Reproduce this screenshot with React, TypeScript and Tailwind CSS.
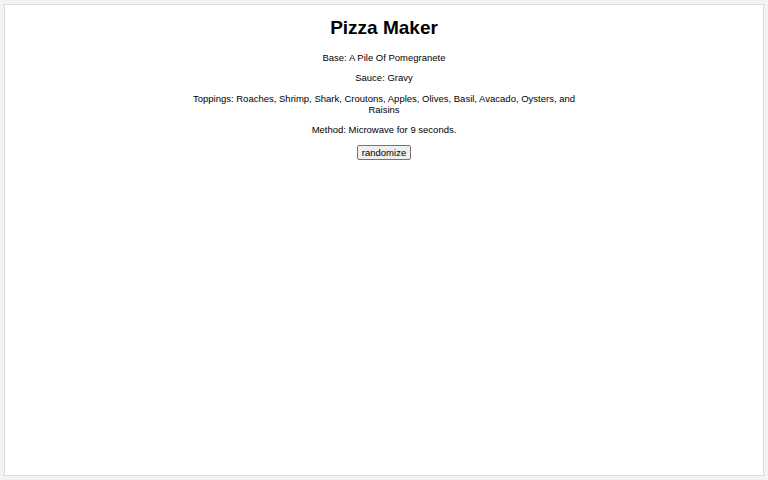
export default function App() {
  const toppings = ["Roaches", "Shrimp", "Shark", "Croutons", "Apples", "Olives", "Basil", "Avacado", "Oysters"];

  return (
    <div className="h-[480px] w-[768px] bg-[#f2f2f2] p-[4px] font-['Liberation_Sans',Arial,sans-serif] text-black">
      <div className="flex h-[472px] flex-col items-center border border-[#dcdcdc] bg-white pt-[12px]">
        <h1 className="text-[19px] font-bold leading-[1.15]">Pizza Maker</h1>
        <div className="mt-[13px] flex w-[400px] flex-col items-center gap-[9.5px] text-center text-[9.5px] leading-[11px]">
          <p>Base: A Pile Of Pomegranete</p>
          <p>Sauce: Gravy</p>
          <p>Toppings: {toppings.join(", ")}, and Raisins</p>
          <p>Method: Microwave for 9 seconds.</p>
          <button className="rounded-[2px] border border-[#767676] bg-[#efefef] px-[4px] py-[1px] text-[9.5px] leading-[11px]">
            randomize
          </button>
        </div>
      </div>
    </div>
  );
}
